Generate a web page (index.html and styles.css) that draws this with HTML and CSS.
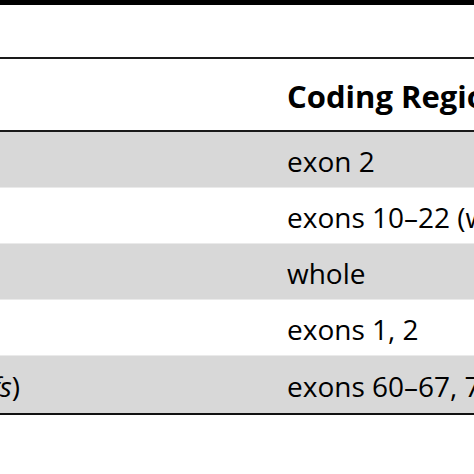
FILE: index.html
```html
<!DOCTYPE html>
<html>
<head>
<meta charset="utf-8">
<link rel="stylesheet" href="styles.css">
</head>
<body>
<div class="frame">
  <table class="genes">
    <colgroup>
      <col class="w1">
      <col class="w2">
      <col class="w3">
    </colgroup>
    <thead>
      <tr class="title-row"><th colspan="3"></th></tr>
      <tr class="head-row">
        <th class="c1"></th>
        <th class="c2">Coding Region</th>
        <th class="c3"></th>
      </tr>
    </thead>
    <tbody>
      <tr class="shade"><td class="c1"></td><td class="c2">exon 2</td><td class="c3"></td></tr>
      <tr><td class="c1"></td><td class="c2">exons 10–22 (whole)</td><td class="c3"></td></tr>
      <tr class="shade"><td class="c1"></td><td class="c2">whole</td><td class="c3"></td></tr>
      <tr><td class="c1"></td><td class="c2">exons 1, 2</td><td class="c3"></td></tr>
      <tr class="shade last"><td class="c1">(p.Lys<i>fs</i>)</td><td class="c2">exons 60–67, 70</td><td class="c3"></td></tr>
    </tbody>
  </table>
</div>
</body>
</html>
```
FILE: styles.css
```css
html, body {
  margin: 0;
  padding: 0;
  background: #fff;
}
.frame {
  width: 474px;
  height: 474px;
  overflow: hidden;
}
.genes {
  border-collapse: collapse;
  margin-left: -300px;
  width: 1100px;
  table-layout: fixed;
  font-family: "Open Sans", "Noto Sans", sans-serif;
  font-size: 28px;
  color: #000;
  border-top: 5px solid #000;
  border-bottom: 2px solid #111;
}
.w1 { width: 587px; }
.w2 { width: 320px; }
.w3 { width: 193px; }
.genes th, .genes td {
  padding: 0;
  text-align: left;
  vertical-align: middle;
  white-space: nowrap;
  overflow: hidden;
}
.genes .c1 {
  text-align: right;
  padding-right: 267px;
}
.title-row th {
  height: 52px;
  border-top: 1px solid #bbb;
  border-bottom: 2px solid #1a1a1a;
}
.head-row th {
  height: 69px;
  font-size: 31px;
  font-weight: 700;
  padding-top: 2px;
  border-bottom: 2px solid #1a1a1a;
}
.genes tbody td {
  height: 53px;
  padding-top: 2px;
  border-bottom: 1px solid #eaeaea;
}
.genes tbody tr.shade td {
  background: #d8d8d8;
}
.genes tbody tr.last td {
  height: 55px;
  border-bottom: 1px solid #f0f0f0;
}
```
